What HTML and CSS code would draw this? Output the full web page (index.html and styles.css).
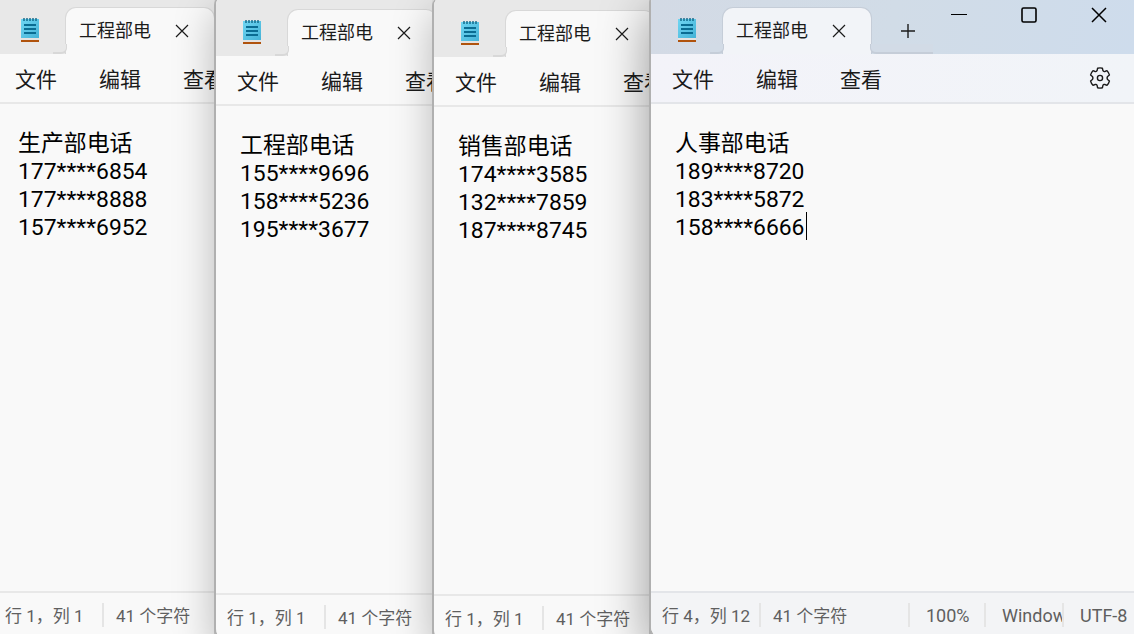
FILE: index.html
```
<!DOCTYPE html>
<html lang="zh-CN">
<head>
    <meta charset="UTF-8">
    <meta name="viewport" content="width=device-width, initial-scale=1.0">
    <title>记事本</title>
    <link rel="stylesheet" href="styles.css">
</head>
<body>

    <!-- Shared icons -->
    <svg class="sprite" aria-hidden="true">
        <defs>
            <linearGradient id="paper" x1="0" y1="0" x2="1" y2="1">
                <stop offset="0" stop-color="#6fd6f3"></stop>
                <stop offset="1" stop-color="#45b2d6"></stop>
            </linearGradient>
        </defs>
        <symbol id="icon-notepad" viewBox="0 0 18 24">
            <rect x="0" y="19" width="18" height="3" fill="#e4e2e0"></rect>
            <rect x="0" y="22" width="18" height="2" fill="#b0530d"></rect>
            <rect x="0" y="1" width="18" height="19" fill="url(#paper)"></rect>
            <path d="M3 0v3M6 0v3M9 0v3M12 0v3M15 0v3" stroke="#0d6587" stroke-width="1.4"></path>
            <path d="M3 7h12M3 11h12M3 15h12" stroke="#0a6c92" stroke-width="1.9"></path>
        </symbol>
        <symbol id="icon-close" viewBox="0 0 14 14">
            <path d="M1 1l12 12M13 1L1 13" fill="none" stroke="currentColor" stroke-width="1.2"></path>
        </symbol>
    </svg>

    <main class="desktop">

        <section class="window window-first" aria-label="生产部电话">
            <header class="titlebar">
                <svg class="app-icon"><use href="#icon-notepad"></use></svg>
                <div class="tab">
                    <span class="tab-title">工程部电</span>
                    <button class="tab-close" aria-label="关闭标签页"><svg><use href="#icon-close"></use></svg></button>
                </div>
            </header>
            <nav class="menubar">
                <button>文件</button>
                <button>编辑</button>
                <button>查看</button>
            </nav>
            <div class="editor">
                <textarea aria-label="文本编辑器" spellcheck="false">生产部电话
177****6854
177****8888
157****6952</textarea>
            </div>
            <footer class="statusbar">
                <span class="cell position">行 1，列 1</span>
                <span class="cell count">41 个字符</span>
            </footer>
        </section>

        <section class="window window-second" aria-label="工程部电话">
            <header class="titlebar">
                <svg class="app-icon"><use href="#icon-notepad"></use></svg>
                <div class="tab">
                    <span class="tab-title">工程部电</span>
                    <button class="tab-close" aria-label="关闭标签页"><svg><use href="#icon-close"></use></svg></button>
                </div>
            </header>
            <nav class="menubar">
                <button>文件</button>
                <button>编辑</button>
                <button>查看</button>
            </nav>
            <div class="editor">
                <textarea aria-label="文本编辑器" spellcheck="false">工程部电话
155****9696
158****5236
195****3677</textarea>
            </div>
            <footer class="statusbar">
                <span class="cell position">行 1，列 1</span>
                <span class="cell count">41 个字符</span>
            </footer>
        </section>

        <section class="window window-third" aria-label="销售部电话">
            <header class="titlebar">
                <svg class="app-icon"><use href="#icon-notepad"></use></svg>
                <div class="tab">
                    <span class="tab-title">工程部电</span>
                    <button class="tab-close" aria-label="关闭标签页"><svg><use href="#icon-close"></use></svg></button>
                </div>
            </header>
            <nav class="menubar">
                <button>文件</button>
                <button>编辑</button>
                <button>查看</button>
            </nav>
            <div class="editor">
                <textarea aria-label="文本编辑器" spellcheck="false">销售部电话
174****3585
132****7859
187****8745</textarea>
            </div>
            <footer class="statusbar">
                <span class="cell position">行 1，列 1</span>
                <span class="cell count">41 个字符</span>
            </footer>
        </section>

        <section class="window window-active" aria-label="人事部电话">
            <header class="titlebar">
                <svg class="app-icon"><use href="#icon-notepad"></use></svg>
                <div class="tab">
                    <span class="tab-title">工程部电</span>
                    <button class="tab-close" aria-label="关闭标签页"><svg><use href="#icon-close"></use></svg></button>
                </div>
                <button class="new-tab" aria-label="新建标签页">
                    <svg viewBox="0 0 16 16"><path d="M8 1v14M1 8h14" stroke="currentColor" stroke-width="1.4"></path></svg>
                </button>
                <div class="window-controls">
                    <button aria-label="最小化">
                        <svg viewBox="0 0 16 16"><path d="M0 7.5h16" stroke="currentColor"></path></svg>
                    </button>
                    <button aria-label="最大化">
                        <svg viewBox="0 0 16 16"><rect x="1" y="1" width="14" height="14" rx="1.5" fill="none" stroke="currentColor" stroke-width="1.6"></rect></svg>
                    </button>
                    <button aria-label="关闭">
                        <svg viewBox="0 0 16 16"><path d="M1 1l14 14M15 1L1 15" stroke="currentColor" stroke-width="1.5"></path></svg>
                    </button>
                </div>
            </header>
            <nav class="menubar">
                <button>文件</button>
                <button>编辑</button>
                <button>查看</button>
                <button class="settings" aria-label="设置">
                    <svg viewBox="0 0 22 22">
                        <path d="M8.6 1.2Q11 .6 13.4 1.2L13.9 3.6Q14.4 4.9 15.8 4.5L18 3.7Q19.8 5.5 20.4 7.9L18.6 9.5Q17.6 11 18.6 12.5L20.4 14.1Q19.8 16.5 18 18.3L15.8 17.5Q14.4 17.1 13.9 18.4L13.4 20.8Q11 21.4 8.6 20.8L8.1 18.4Q7.6 17.1 6.2 17.5L4 18.3Q2.2 16.5 1.6 14.1L3.4 12.5Q4.4 11 3.4 9.5L1.6 7.9Q2.2 5.5 4 3.7L6.2 4.5Q7.6 4.9 8.1 3.6Z" fill="none" stroke="currentColor" stroke-width="1.4" stroke-linejoin="round"></path>
                        <circle cx="11" cy="11" r="2.6" fill="none" stroke="currentColor" stroke-width="1.4"></circle>
                    </svg>
                </button>
            </nav>
            <div class="editor">
                <textarea aria-label="文本编辑器" spellcheck="false">人事部电话
189****8720
183****5872
158****6666</textarea>
                <span class="caret"></span>
            </div>
            <footer class="statusbar">
                <span class="cell position">行 4，列 12</span>
                <span class="cell count">41 个字符</span>
                <span class="cell zoom">100%</span>
                <span class="cell line-ending">Windows</span>
                <span class="cell encoding">UTF-8</span>
            </footer>
        </section>

    </main>

</body>
</html>
```
FILE: styles.css
```
* {
    box-sizing: border-box;
}
body {
    margin: 0;
    font-family: Roboto, "Noto Sans CJK SC", sans-serif;
    background: #e8e8e8;
    color: #1b1b1b;
}
button {
    padding: 0;
    border: none;
    background: none;
    color: inherit;
    font: inherit;
    cursor: pointer;
}
.sprite {
    position: absolute;
    width: 0;
    height: 0;
}
.desktop {
    display: flex;
    height: 100vh;
    overflow: hidden;
}

/* Windows */
.window {
    position: relative;
    display: flex;
    flex-direction: column;
    flex: 0 0 218px;
    height: calc(100vh + 8px);
    margin-top: -6px;
    overflow: hidden;
    background: #f9f9f9;
    border-left: 2px solid #b0b0b0;
    border-radius: 9px 0 0 9px;
    box-shadow: 0 16px 40px rgba(0, 0, 0, 0.26);
}
.window-first {
    flex-basis: 222px;
    margin-left: -8px;
}
.window-second {
    margin-top: -4px;
}
.window-third {
    flex-basis: 217px;
    margin-top: -3px;
}
.window-active {
    flex: 1 1 0;
    min-width: 0;
    box-shadow: 0 16px 50px rgba(0, 0, 0, 0.4);
}

/* Title bar */
.titlebar {
    display: flex;
    flex: none;
    align-items: flex-end;
    height: 60px;
    background: #e8e8e8;
}
.window-active .titlebar {
    background: linear-gradient(100deg, #d3dae5, #d1dce7 50%, #cedcec);
}
.app-icon {
    flex: none;
    width: 18px;
    height: 24px;
    margin: 0 26px 12px 27px;
}
.tab {
    position: relative;
    display: flex;
    flex: none;
    align-items: center;
    width: 150px;
    height: 47px;
    padding-left: 13px;
    background: #f9f9f9;
    border: 1px solid #d8d8d8;
    border-width: 1px 1px 0;
    border-radius: 11px 11px 0 0;
}
.tab::before,
.window-active .tab::after {
    content: "";
    position: absolute;
    bottom: 0;
    left: -13px;
    width: 13px;
    height: 8px;
    background: #e8e8e8;
    border: solid #d8d8d8;
    border-width: 0 1px 2px 0;
    border-radius: 0 0 6px 0;
}
.window-active .tab::after {
    left: auto;
    right: -62px;
    width: 62px;
    border-width: 0 0 2px 1px;
    border-radius: 0 0 0 6px;
}
.window-active .tab {
    background: #f2f4f8;
    border-color: #c5cdd8;
}
.window-active .tab::before,
.window-active .tab::after {
    background: #d2dbe6;
    border-color: #c5cdd8;
}
.tab-title {
    font-size: 18px;
    line-height: 24px;
}
.tab-close {
    width: 36px;
    height: 32px;
    margin-left: 13px;
}
.tab-close svg {
    width: 14px;
    height: 14px;
}
.tab-close svg,
.new-tab svg,
.window-controls svg,
.settings svg {
    display: block;
    margin: auto;
}
.new-tab {
    position: relative;
    z-index: 1;
    flex: none;
    width: 32px;
    height: 32px;
    margin: 0 0 7px 20px;
}
.new-tab svg,
.window-controls svg {
    width: 16px;
    height: 16px;
}
.window-controls {
    display: flex;
    flex: none;
    align-self: flex-start;
    margin-left: auto;
}
.window-controls button {
    width: 70px;
    height: 42px;
    color: #000;
}

/* Menu bar */
.menubar {
    display: flex;
    flex: none;
    height: 50px;
    border-bottom: 2px solid #e8e8e8;
}
.window-active .menubar {
    background: linear-gradient(100deg, #f3f3f9, #f1f4f8);
    border-color: #e3e5e9;
}
.menubar button {
    flex: none;
    padding: 0 21px;
    font-size: 21px;
    white-space: nowrap;
}
.menubar .settings {
    margin-left: auto;
    padding: 0 23px;
}
.settings svg {
    width: 22px;
    height: 22px;
}

/* Editor */
.editor {
    position: relative;
    flex: 1;
    min-height: 0;
}
.editor textarea {
    display: block;
    width: 100%;
    height: 100%;
    padding: 26px 0 0 24px;
    border: none;
    outline: none;
    resize: none;
    overflow: hidden;
    background: #f9f9f9;
    color: #000;
    font-family: Roboto, "Noto Sans CJK SC", sans-serif;
    font-size: 22px;
    font-size-adjust: 0.55;
    line-height: 28px;
}
.caret {
    position: absolute;
    top: 108px;
    left: 155px;
    width: 1px;
    height: 28px;
    background: #000;
}

/* Status bar */
.statusbar {
    display: flex;
    flex: none;
    height: 45px;
    padding-top: 10px;
    border-top: 2px solid #e8e8e8;
    color: #5f5f5f;
    font-size: 18px;
    line-height: 26px;
}
.window-active .statusbar {
    background: #f3f4f6;
    border-color: #e3e5e9;
}
.cell {
    flex: none;
    height: 24px;
    overflow: hidden;
    white-space: nowrap;
    border-left: 2px solid #e5e5e5;
}
.position,
.count {
    font-size: 17px;
}
.position {
    width: 108px;
    padding-left: 11px;
    border-left: none;
}
.count {
    padding-left: 12px;
}
.zoom {
    width: 76px;
    margin-left: auto;
    padding-left: 16px;
}
.line-ending {
    width: 78px;
    padding-left: 16px;
}
.encoding {
    width: 72px;
    padding-left: 16px;
}
```
